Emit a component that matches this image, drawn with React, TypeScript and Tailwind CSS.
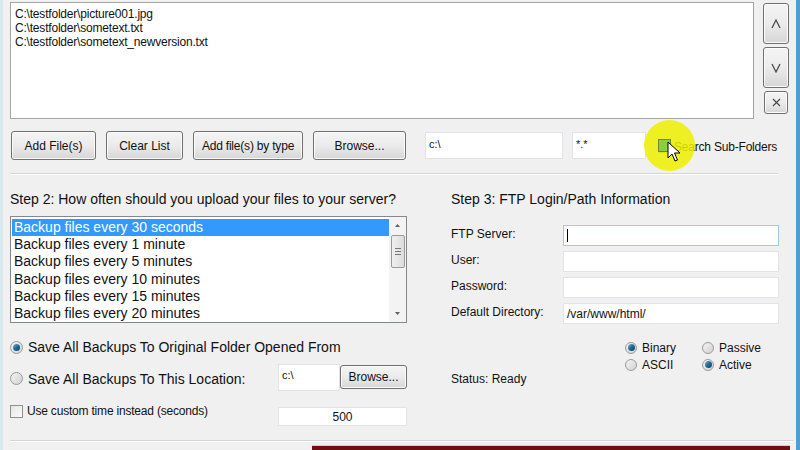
import React from "react";

const font = { fontFamily: '"Liberation Sans", Arial, sans-serif' };

function WinButton({ label, className }: { label: React.ReactNode; className: string }) {
  return (
    <div
      className={`flex items-center justify-center rounded-[3px] border border-[#707070] bg-gradient-to-b from-[#f4f4f4] via-[#ebebeb] to-[#d6d6d6] text-[12px] text-[#111] shadow-[inset_0_0_0_1px_#fbfbfb] ${className}`}
    >
      {label}
    </div>
  );
}

function Radio({ checked, size = "w-[13px] h-[13px]", className = "" }: { checked?: boolean; size?: string; className?: string }) {
  return (
    <div
      className={`${size} shrink-0 rounded-full border border-[#9a9a9a] bg-gradient-to-br from-[#f4f4f4] to-[#d2d2d2] flex items-center justify-center ${className}`}
    >
      {checked && <div className="w-[7px] h-[7px] rounded-full bg-gradient-to-br from-[#6ab0d8] via-[#1f6b98] to-[#0e3f5e]" />}
    </div>
  );
}

function Checkbox({ className = "" }: { className?: string }) {
  return (
    <div className={`w-[13px] h-[13px] shrink-0 border border-[#8e8f8f] bg-gradient-to-br from-[#e6e6e6] to-[#fafafa] ${className}`} />
  );
}

function Field({ className, children }: { className: string; children?: React.ReactNode }) {
  return (
    <div className={`bg-white border border-[#e2e3ea] ${className}`}>{children}</div>
  );
}

const intervals = [
  "Backup files every 30 seconds",
  "Backup files every 1 minute",
  "Backup files every 5 minutes",
  "Backup files every 10 minutes",
  "Backup files every 15 minutes",
  "Backup files every 20 minutes",
];

export default function App() {
  return (
    <div
      className="relative w-[800px] h-[450px] overflow-hidden bg-[#f0f0f0] border-l-[3px] border-l-[#d8e8ec] border-r-[4px] border-r-[#4f9fce] text-[#111]"
      style={font}
    >
      {/* file list + move buttons */}
      <div className="flex pl-[7px] pt-[2px]">
        <div className="w-[744px] h-[117px] border border-[#a5a5a5] bg-white pl-[4px] pt-[4px] text-[12px] leading-[14px] tracking-[-0.2px]">
          <div>C:\testfolder\picture001.jpg</div>
          <div>C:\testfolder\sometext.txt</div>
          <div>C:\testfolder\sometext_newversion.txt</div>
        </div>
        <div className="ml-[9px] mt-[1px] flex w-[26px] flex-col gap-[3px]">
          <WinButton
            className="h-[41px] w-[26px]"
            label={
              <svg width="10" height="10" viewBox="0 0 10 10">
                <polyline points="1,9 5,1 9,9" fill="none" stroke="#444" strokeWidth="1.2" />
              </svg>
            }
          />
          <WinButton
            className="h-[41px] w-[26px]"
            label={
              <svg width="10" height="10" viewBox="0 0 10 10">
                <polyline points="1,1 5,9 9,1" fill="none" stroke="#444" strokeWidth="1.2" />
              </svg>
            }
          />
          <WinButton
            className="ml-[1px] h-[23px] w-[24px]"
            label={
              <svg width="9" height="9" viewBox="0 0 9 9">
                <path d="M1 1 L8 8 M8 1 L1 8" stroke="#444" strokeWidth="1.1" />
              </svg>
            }
          />
        </div>
      </div>

      {/* step 1 buttons row */}
      <div className="flex items-center pl-[8px] pt-[12px]">
        <WinButton className="h-[29px] w-[85px]" label="Add File(s)" />
        <WinButton className="ml-[10px] h-[29px] w-[77px]" label="Clear List" />
        <WinButton className="ml-[10px] h-[29px] w-[110px] tracking-[-0.2px]" label="Add file(s) by type" />
        <WinButton className="ml-[10px] h-[29px] w-[93px]" label="Browse..." />
        <Field className="ml-[19px] h-[27px] w-[138px] px-[3px] pt-[3px] text-[11px]">c:\</Field>
        <Field className="ml-[9px] h-[27px] w-[74px] px-[3px] pt-[3px] text-[11px]">*.*</Field>
        <Checkbox className="ml-[12px] mt-[2px]" />
        <span className="ml-[3px] mt-[2px] text-[12px] tracking-[-0.2px]">Search Sub-Folders</span>
      </div>

      {/* divider */}
      <div className="ml-[7px] mt-[13px] h-[2px] w-[768px] border-t border-[#d5d5d5] border-b border-b-white" />

      {/* steps 2 and 3 */}
      <div className="flex pl-[7px] pt-[14px]">
        <div className="flex w-[397px] flex-col">
          <div className="h-[20px] text-[14px] leading-[20px]">
            Step 2: How often should you upload your files to your server?
          </div>
          <div className="mt-[7px] flex h-[107px] border border-[#828790] bg-white">
            <div className="flex-1 pl-[1px] pt-[2px] text-[14px] leading-[17.2px]">
              {intervals.map((t, i) => (
                <div key={t} className={`pl-[2px] ${i === 0 ? "bg-[#3399ff] text-white" : ""}`}>
                  {t}
                </div>
              ))}
            </div>
            <div className="flex w-[17px] flex-col items-center bg-[#f3f3f3]">
              <svg width="7" height="16" viewBox="0 0 7 16">
                <polygon points="1,10 3.5,7 6,10" fill="#606060" />
              </svg>
              <div className="mt-[2px] flex h-[33px] w-[14px] flex-col items-center justify-center gap-[2px] rounded-[2px] border border-[#9a9a9a] bg-gradient-to-r from-[#f0f0f0] to-[#dcdcdc]">
                <div className="h-[1px] w-[6px] bg-[#777]" />
                <div className="h-[1px] w-[6px] bg-[#777]" />
                <div className="h-[1px] w-[6px] bg-[#777]" />
              </div>
              <div className="flex-1" />
              <svg width="7" height="16" viewBox="0 0 7 16">
                <polygon points="1,6 3.5,9 6,6" fill="#606060" />
              </svg>
            </div>
          </div>

          <div className="mt-[14px] flex h-[20px] items-center text-[14px]">
            <Radio checked />
            <span className="ml-[5px]">Save All Backups To Original Folder Opened From</span>
          </div>
          <div className="mt-[7px] flex h-[27px] items-start text-[14px]">
            <Radio className="mt-[8px]" />
            <span className="ml-[5px] mt-[6px] leading-[18px]">Save All Backups To This Location:</span>
            <Field className="ml-auto h-[27px] w-[62px] px-[3px] pt-[2px] text-[11px]">c:\</Field>
            <WinButton className="mt-[1px] h-[24px] w-[67px]" label="Browse..." />
          </div>
          <div className="mt-[13px] flex items-start">
            <Checkbox className="mt-[1px]" />
            <span className="ml-[4px] text-[12px] leading-[14px] tracking-[-0.2px]">Use custom time instead (seconds)</span>
            <Field className="ml-auto mt-[3px] flex h-[19px] w-[129px] items-center justify-center text-[12px]">500</Field>
          </div>
        </div>

        <div className="ml-[44px] flex w-[328px] flex-col">
          <div className="h-[20px] text-[14px] leading-[20px]">Step 3: FTP Login/Path Information</div>
          <div className="mt-[16px] flex flex-col gap-[5px] text-[12px]">
            {[
              ["FTP Server:", ""],
              ["User:", ""],
              ["Password:", ""],
              ["Default Directory:", "/var/www/html/"],
            ].map(([label, value], i) => (
              <div key={label} className="flex h-[21px] items-center">
                <span className="mb-[3px] w-[112px]">{label}</span>
                <div
                  className={`flex h-[21px] flex-1 items-center px-[3px] bg-white border ${
                    i === 0 ? "border-[#a6c8de]" : "border-[#e2e3ea]"
                  }`}
                >
                  {i === 0 ? <div className="h-[13px] w-[1px] bg-black" /> : value}
                </div>
              </div>
            ))}
          </div>
          <div className="mt-[15px] flex items-start text-[12px]">
            <div className="w-[181px] pt-[33px] leading-[14px]">Status: Ready</div>
            <div className="grid grid-cols-[77px_77px] content-start">
              {[
                ["Binary", true],
                ["Passive", false],
                ["ASCII", false],
                ["Active", true],
              ].map(([label, on]) => (
                <div key={label as string} className="flex h-[17px] items-center">
                  <Radio checked={on as boolean} size="w-[12px] h-[12px]" />
                  <span className="ml-[5px]">{label as string}</span>
                </div>
              ))}
            </div>
          </div>
        </div>
      </div>

      {/* bottom divider + red bar */}
      <div className="ml-[7px] mt-[14px] h-[2px] w-[783px] border-t border-[#d5d5d5] border-b border-b-white" />
      <div className="ml-[309px] mt-[3px] h-[6px] w-[478px] border-t border-[#e8c8c8] bg-[#6e0f10]" />

      {/* cursor highlight overlay */}
      <div className="pointer-events-none absolute left-[641px] top-[120px] h-[51px] w-[51px] rounded-full bg-[#eef000]/85" />
      <div className="pointer-events-none absolute left-[655px] top-[139px] h-[13px] w-[13px] border border-[#6a8a40] bg-[#8ccf3a]" />
      <svg className="pointer-events-none absolute left-[664px] top-[141px]" width="14" height="22" viewBox="0 0 14 22">
        <path d="M1 1 L1 17 L5 13 L8 20 L10.5 19 L7.5 12 L13 12 Z" fill="white" stroke="black" strokeWidth="1" />
      </svg>
    </div>
  );
}
